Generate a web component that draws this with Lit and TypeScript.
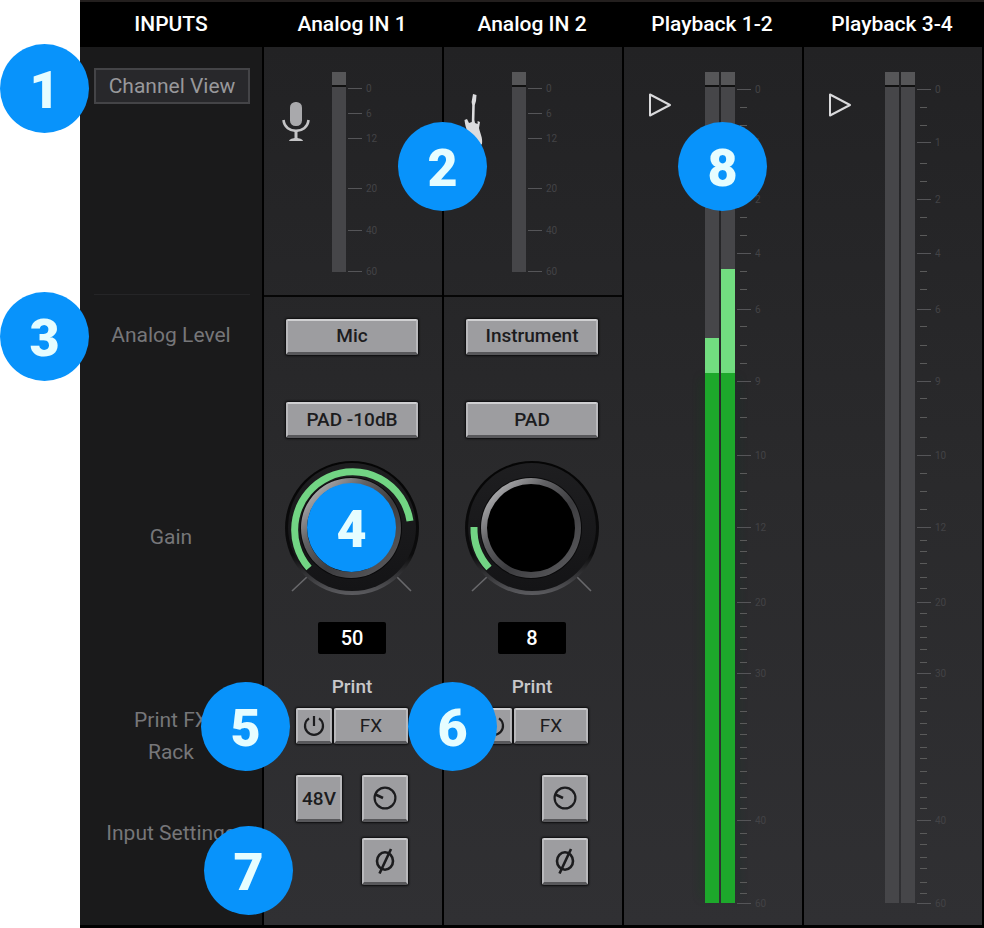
import { LitElement, html, css, svg, nothing } from "lit";
import { customElement, property } from "lit/decorators.js";
import { classMap } from "lit/directives/class-map.js";
import { styleMap } from "lit/directives/style-map.js";

interface Mark {
  y: number;
  label: string;
}

const ANALOG_MARKS: Mark[] = [
  { y: 16, label: "0" },
  { y: 41, label: "6" },
  { y: 66, label: "12" },
  { y: 116, label: "20" },
  { y: 158, label: "40" },
  { y: 199, label: "60" },
];

const PLAYBACK_MARKS: Mark[] = [
  { y: 17, label: "0" },
  { y: 70, label: "1" },
  { y: 127, label: "2" },
  { y: 181, label: "4" },
  { y: 237, label: "6" },
  { y: 309, label: "9" },
  { y: 383, label: "10" },
  { y: 455, label: "12" },
  { y: 530, label: "20" },
  { y: 601, label: "30" },
  { y: 748, label: "40" },
  { y: 831, label: "60" },
];

const PLAYBACK_MINOR = [
  35, 53, 91, 109, 145, 163, 199, 217, 254, 273, 291, 326, 345, 365, 401, 419,
  437, 468, 479, 491, 505, 516, 541, 554, 565, 577, 590, 615, 626, 639, 651,
  662, 675, 686, 699, 711, 725, 736, 761, 772, 785, 796, 810, 821,
];

/* A level meter: one or two bars with a dB scale to their right. */
@customElement("level-meter")
export class LevelMeter extends LitElement {
  @property({ type: Boolean }) long = false;
  @property({ attribute: false }) levels: { low: number; high: number }[] = [];

  static styles = css`
    :host {
      display: flex;
    }
    .bars {
      display: flex;
      gap: 2px;
    }
    .bar {
      display: flex;
      flex-direction: column;
      justify-content: flex-end;
      width: 14px;
      height: 200px;
      background: linear-gradient(
        #565658 0 13px,
        #111 13px 15px,
        #464649 15px
      );
    }
    .bar.long {
      height: 831px;
    }
    .high {
      background: #72dd80;
    }
    .low {
      background: #1da82b;
    }
    .lit:first-child .low {
      box-shadow: -8px 0 10px -6px #0f4a17;
    }
    .lit:last-child .low {
      box-shadow: 8px 0 10px -6px #0f3a2c;
    }
    svg {
      display: block;
      overflow: visible;
    }
    .major {
      stroke: #555558;
    }
    .minor {
      stroke: #5a5a5a;
    }
    text {
      fill: #434346;
      font: 10px Roboto, sans-serif;
    }
  `;

  render() {
    const marks = this.long ? PLAYBACK_MARKS : ANALOG_MARKS;
    const height = this.long ? 831 : 200;
    return html`
      <div class="bars" role="img" aria-label="Level meter">
        ${this.levels.map(
          (l) => html`<div
            class=${classMap({ bar: true, long: this.long, lit: l.low > 0 })}
          >
            <div class="high" style=${styleMap({ height: `${l.high}%` })}></div>
            <div class="low" style=${styleMap({ height: `${l.low}%` })}></div>
          </div>`
        )}
      </div>
      <svg width="48" height=${height} aria-hidden="true">
        ${marks.map(
          (m) => svg`
            <path class="major" d="M2 ${m.y + 0.5}H16" />
            <text x="20" y=${m.y + 4}>${m.label}</text>`
        )}
        ${this.long
          ? PLAYBACK_MINOR.map(
              (y) => svg`<path class="minor" d="M5 ${y + 0.5}H12" />`
            )
          : nothing}
      </svg>
    `;
  }
}

/* A rotary gain control drawn over a native range input. */
@customElement("gain-knob")
export class GainKnob extends LitElement {
  @property({ type: Number }) value = 0;
  @property() arc = "";
  @property() name = "";

  static styles = css`
    :host {
      display: flex;
      flex-direction: column;
      align-items: center;
      gap: 27px;
    }
    .knob {
      position: relative;
      display: block;
      height: 134px;
    }
    svg {
      display: block;
    }
    input {
      position: absolute;
      inset: 0;
      width: 100%;
      height: 100%;
      margin: 0;
      opacity: 0;
      cursor: pointer;
    }
    output {
      width: 68px;
      background: #000;
      color: #fff;
      border-radius: 2px;
      text-align: center;
      font: 500 20px/32px Roboto, sans-serif;
    }
  `;

  render() {
    return html`
      <label class="knob">
        <svg width="134" height="134" viewBox="0 0 134 134" aria-hidden="true">
          <defs>
            <linearGradient id="rim" x1="0" y1="0" x2="0" y2="1">
              <stop offset="0" stop-color="#050505" />
              <stop offset="0.7" stop-color="#0c0c0d" />
              <stop offset="1" stop-color="#5c5c60" />
            </linearGradient>
            <linearGradient id="well" x1="0" y1="0" x2="0" y2="1">
              <stop offset="0" stop-color="#1e1e20" />
              <stop offset="1" stop-color="#141416" />
            </linearGradient>
            <linearGradient id="cap" x1="0.1" y1="0.1" x2="0.9" y2="0.9">
              <stop offset="0" stop-color="#b4b4b6" />
              <stop offset="0.3" stop-color="#626265" />
              <stop offset="0.6" stop-color="#3c3c3f" />
              <stop offset="1" stop-color="#58585b" />
            </linearGradient>
          </defs>
          <path d="M7 130L23 115M111 115L126 130" stroke="#68686b" stroke-width="1.6" />
          <circle cx="67" cy="67" r="67" fill="url(#rim)" />
          <circle cx="67" cy="66" r="64" fill="url(#well)" />
          <path d=${this.arc} fill="none" stroke="#72d584" stroke-width="7" />
          <circle cx="66" cy="67" r="51" fill="#09090a" />
          <circle cx="66" cy="67" r="50" fill="url(#cap)" />
          <circle cx="66" cy="67" r="44" fill="#000" />
        </svg>
        <input type="range" min="0" max="65" .value=${String(this.value)} aria-label=${this.name} />
      </label>
      <output>${this.value}</output>
    `;
  }
}

const micIcon = html`<svg width="28" height="42" viewBox="0 0 28 42" aria-hidden="true">
  <rect x="8" y="1" width="12" height="24" rx="5.500" fill="#a9a9ac" />
  <path d="M1.500 19C3 33.500 25 33.500 26.500 19" fill="none" stroke="#c4c4c6" stroke-width="2.600" />
  <path d="M14 30V38" stroke="#c4c4c6" stroke-width="3" />
  <path d="M7 40C8 36 20 36 21 40Z" fill="#c4c4c6" />
</svg>`;

const guitarIcon = html`<svg width="28" height="54" viewBox="0 0 28 54" aria-hidden="true">
  <path
    d="M11 0L14.500 1L14 7L12.800 11L12.400 26L13 29L15.600 30L15.600 27L18 28L17 34C18 39 21 44 20 50C16 54 6 53 3 49C1 44 4 40 5 37C4 33 3 31 2.500 26L5 25L7 29L9.800 28L10.200 11L9.600 8Z"
    fill="#dcdcde"
  />
</svg>`;

const playIcon = html`<svg width="24" height="26" viewBox="0 0 24 26" aria-hidden="true">
  <path d="M2 2.500V23.500L22 13Z" fill="none" stroke="#dadadc" stroke-width="2" stroke-linejoin="round" />
</svg>`;

const powerIcon = html`<svg width="22" height="22" viewBox="0 0 22 22" aria-hidden="true">
  <path d="M6 3.400A9 9 0 1 0 16 3.400M11 1V11" fill="none" stroke="#1c1c1e" stroke-width="2.200" />
</svg>`;

const lowCutIcon = html`<svg width="26" height="26" viewBox="0 0 26 26" aria-hidden="true">
  <circle cx="13" cy="13" r="10.400" fill="none" stroke="#1c1c1e" stroke-width="2.200" />
  <path d="M3.500 9.500L11 13" stroke="#1c1c1e" stroke-width="2.600" />
</svg>`;

const phaseIcon = html`<svg width="26" height="26" viewBox="0 0 26 26" aria-hidden="true">
  <ellipse cx="13" cy="13" rx="8" ry="8.800" fill="none" stroke="#1c1c1e" stroke-width="2.600" />
  <path d="M7.500 25.500L19 1" stroke="#1c1c1e" stroke-width="2.600" />
</svg>`;

interface Analog {
  title: string;
  source: string;
  pad: string;
  gain: number;
  arc: string;
  icon: unknown;
  phantom: boolean;
}

const ANALOG: Analog[] = [
  {
    title: "Analog IN 1",
    source: "Mic",
    pad: "PAD -10dB",
    gain: 50,
    arc: "M24 107A58 58 0 1 1 125 60",
    icon: micIcon,
    phantom: true,
  },
  {
    title: "Analog IN 2",
    source: "Instrument",
    pad: "PAD",
    gain: 8,
    arc: "M24 107A58 58 0 0 1 9 66",
    icon: guitarIcon,
    phantom: false,
  },
];

const PLAYBACK = [
  {
    title: "Playback 1-2",
    levels: [
      { low: 63.8, high: 4.2 },
      { low: 63.8, high: 12.5 },
    ],
  },
  {
    title: "Playback 3-4",
    levels: [
      { low: 0, high: 0 },
      { low: 0, high: 0 },
    ],
  },
];

@customElement("app-root")
export class AppRoot extends LitElement {
  static styles = css`
    :host {
      display: block;
      background: #fff;
      font-family: Roboto, sans-serif;
      color: #fff;
    }
    * {
      box-sizing: border-box;
    }
    .console {
      display: grid;
      grid-template-columns: 182px repeat(4, minmax(178px, 1fr));
      column-gap: 2px;
      min-height: 100vh;
      margin-left: 80px;
      padding: 0 2px 3px 0;
      background: #000;
      border-top: 2px solid #231f1e;
    }
    .column {
      position: relative;
      display: flex;
      flex-direction: column;
    }
    h2 {
      margin: 0;
      padding-right: 2px;
      background: #000;
      text-align: center;
      font-size: 21px;
      font-weight: 500;
      line-height: 45px;
    }
    .side h2 {
      padding-right: 0;
    }
    .strip {
      flex: 1;
      padding-right: 2px;
      background: linear-gradient(#222224, #2a2a2c 50%, #303033);
    }
    .side .strip {
      background: #1a1a1b;
      padding-right: 0;
    }

    .row {
      display: flex;
      align-items: center;
      justify-content: center;
      text-align: center;
      font-size: 21px;
      line-height: 32px;
      color: #767679;
    }
    .row.view {
      align-items: flex-start;
      height: 248px;
      padding-top: 21px;
      margin: 0 12px 0 14px;
      border-bottom: 1px solid #252527;
    }
    .row.level {
      height: 80px;
    }
    .row.gain {
      height: 324px;
    }
    .row.rack {
      height: 74px;
    }
    .row.settings {
      height: 120px;
    }
    .two-lines {
      width: 80px;
    }
    .view-button {
      width: 100%;
      height: 36px;
      padding: 0;
      background: #28282b;
      border: 2px solid #444447;
      color: #98989b;
      font: 21px Roboto, sans-serif;
    }

    .meters {
      display: flex;
      width: 176px;
      height: 248px;
      margin: 0 auto;
      padding: 25px 0 0 18px;
      gap: 22px;
    }
    .meters.long {
      height: auto;
      padding-left: 24px;
      gap: 33px;
    }
    .source-icon {
      width: 28px;
      padding-top: 29px;
    }
    .meters.long .source-icon {
      width: 24px;
      padding-top: 20px;
    }
    .source-icon.raised {
      padding-top: 22px;
    }
    .source-icon svg {
      display: block;
    }

    .controls {
      display: flex;
      flex-direction: column;
      align-items: center;
      border-top: 2px solid #060606;
      margin-right: -2px;
      padding: 22px 2px 0 0;
    }
    .key {
      display: flex;
      align-items: center;
      justify-content: center;
      padding: 0;
      background: #9d9da0;
      border: 2px solid #b9b9bc;
      border-top-color: #d0d0d2;
      border-bottom: 3px solid #58585b;
      border-radius: 2px;
      box-shadow: 0 0 2px 1px #0c0c0d;
      color: #1c1c1e;
      font: 500 19px Roboto, sans-serif;
    }
    .wide {
      width: 132px;
      height: 36px;
      padding-bottom: 2px;
      margin-bottom: 47px;
    }
    .wide.pad {
      padding-bottom: 0;
      margin-bottom: 23px;
    }
    .print {
      margin: 22px 0 10px;
      font-size: 19px;
      font-weight: 500;
      line-height: 22px;
      color: #c8c8ca;
    }
    .fx-row {
      display: grid;
      grid-template-columns: 36px 74px;
      gap: 2px;
      width: 112px;
      height: 36px;
    }
    .fx-row .key {
      font-weight: 400;
    }
    .keys {
      display: grid;
      grid-template-columns: 46px 46px;
      grid-auto-rows: 47px;
      justify-content: space-between;
      row-gap: 16px;
      width: 112px;
      margin-top: 31px;
    }
    .right {
      grid-column: 2;
    }

    .badge {
      position: absolute;
      z-index: 2;
      width: 89px;
      height: 89px;
      border-radius: 50%;
      background: #0893fb;
      color: #e6fdff;
      text-align: center;
      font: 900 52px/94px Roboto, sans-serif;
      pointer-events: none;
    }
    .n1 {
      left: -80px;
      top: 42px;
    }
    .n3 {
      left: -80px;
      top: 290px;
    }
    .n5 {
      left: 121px;
      top: 680px;
    }
    .n7 {
      left: 124px;
      top: 824px;
    }
    .n2 {
      left: -46px;
      top: 120px;
    }
    .n6 {
      left: -36px;
      top: 680px;
    }
    .n8 {
      left: 54px;
      top: 120px;
    }
    .dial {
      position: relative;
    }
    .n4 {
      left: 22px;
      top: 22px;
    }
  `;

  private analog(c: Analog, i: number) {
    return html`<section class="column">
      <h2>${c.title}</h2>
      <div class="strip">
        <div class="meters">
          <div class=${classMap({ "source-icon": true, raised: !c.phantom })}>${c.icon}</div>
          <level-meter .levels=${[{ low: 0, high: 0 }]}></level-meter>
        </div>
        <div class="controls">
          <button class="key wide">${c.source}</button>
          <button class="key wide pad">${c.pad}</button>
          <div class="dial">
            <gain-knob .value=${c.gain} .arc=${c.arc} .name=${`${c.title} gain`}></gain-knob>
            ${i === 0 ? html`<span class="badge n4">4</span>` : nothing}
          </div>
          <div class="print">Print</div>
          <div class="fx-row">
            <button class="key" aria-label="Power">${powerIcon}</button>
            <button class="key">FX</button>
          </div>
          <div class="keys">
            ${c.phantom ? html`<button class="key">48V</button>` : nothing}
            <button class="key right" aria-label="Low cut">${lowCutIcon}</button>
            <button class="key right" aria-label="Phase invert">${phaseIcon}</button>
          </div>
        </div>
      </div>
      ${i === 1
        ? html`<span class="badge n2">2</span><span class="badge n6">6</span>`
        : nothing}
    </section>`;
  }

  render() {
    return html`<main class="console">
      <section class="column side">
        <h2>INPUTS</h2>
        <div class="strip">
          <div class="row view"><button class="view-button">Channel View</button></div>
          <div class="row level">Analog Level</div>
          <div class="row gain">Gain</div>
          <div class="row rack"><span class="two-lines">Print FX Rack</span></div>
          <div class="row settings">Input Settings</div>
        </div>
        <span class="badge n1">1</span>
        <span class="badge n3">3</span>
        <span class="badge n5">5</span>
        <span class="badge n7">7</span>
      </section>
      ${ANALOG.map((c, i) => this.analog(c, i))}
      ${PLAYBACK.map(
        (p, i) => html`<section class="column">
          <h2>${p.title}</h2>
          <div class="strip">
            <div class="meters long">
              <div class="source-icon">${playIcon}</div>
              <level-meter long .levels=${p.levels}></level-meter>
            </div>
          </div>
          ${i === 0 ? html`<span class="badge n8">8</span>` : nothing}
        </section>`
      )}
    </main>`;
  }
}
